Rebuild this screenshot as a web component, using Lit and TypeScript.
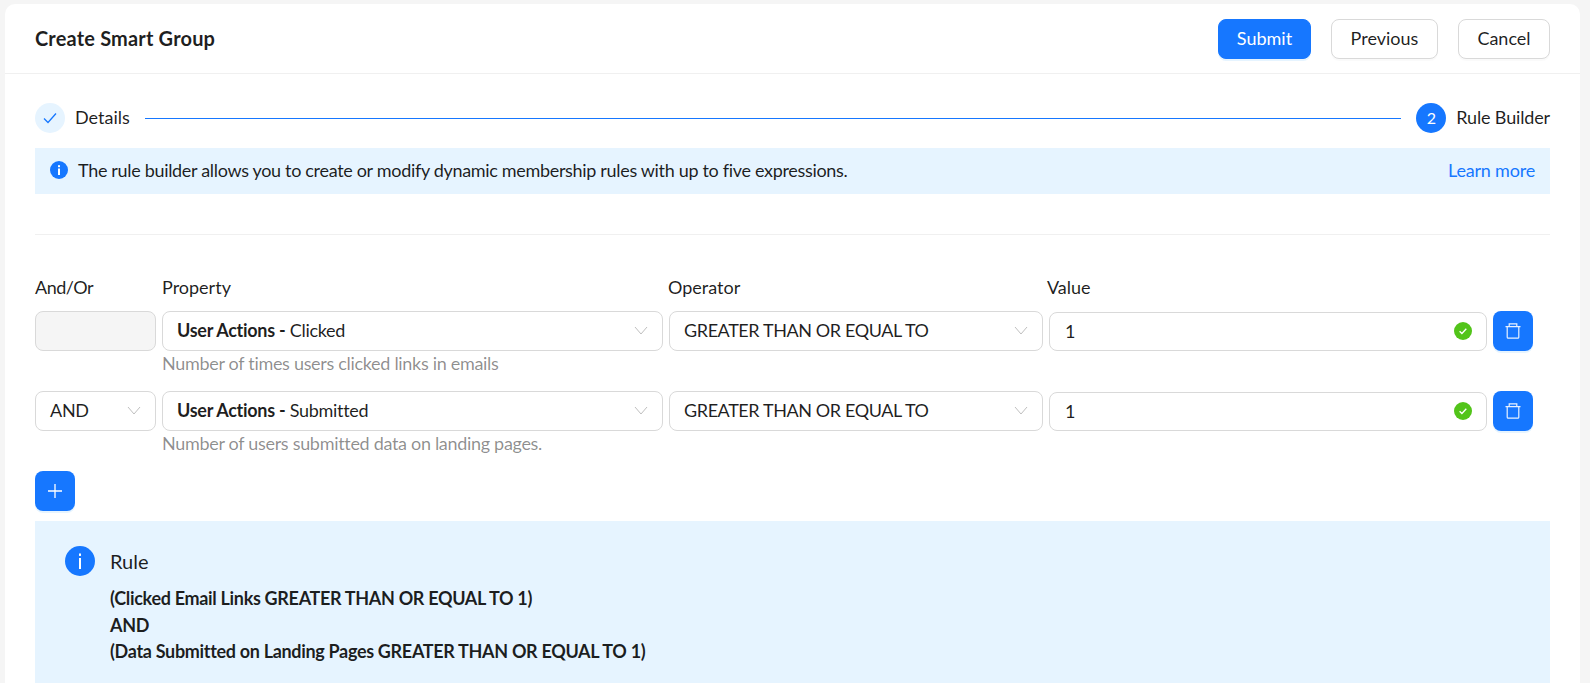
import { LitElement, html, css, svg } from "lit";
import { customElement } from "lit/decorators.js";

const chevron = html`<svg class="chev" viewBox="0 0 14 9" width="14" height="9" fill="none" stroke="#bfbfbf" stroke-width="1"><path d="M1 1l6 7 6-7"/></svg>`;
const okIcon = html`<svg class="ok" viewBox="0 0 18 18" width="18" height="18"><circle cx="9" cy="9" r="9" fill="#52c41a"/><path d="M5.6 9.2l2.3 2.3 4.4-4.8" fill="none" stroke="#fff" stroke-width="1.3"/></svg>`;
const trash = html`<svg viewBox="0 0 16 16" width="16" height="16" fill="none" stroke="#fff" stroke-width="1.2" opacity=".9"><path d="M.5 3.6h15M4.2 3.6V.8h7.6v2.8M2.2 3.6v10.6q0 1 1 1h9.6q1 0 1-1V3.6"/></svg>`;
const infoSmall = svg`<circle cx="9" cy="9" r="9" fill="#1677ff"/><rect x="8" y="7.5" width="2" height="6.5" fill="#fff"/><rect x="8" y="4.2" width="2" height="2" fill="#fff"/>`;

@customElement("app-root")
export class AppRoot extends LitElement {
  static styles = css`
    :host { display: block; height: 683px; overflow: hidden; background: #f5f5f5; font-family: Lato, sans-serif; font-size: 18px; color: rgba(0,0,0,.88); padding: 4px 10px 0 5px; box-sizing: border-box; }
    * { box-sizing: border-box; }
    .card { background: #fff; border-radius: 10px 10px 0 0; height: 700px; }
    .head { height: 70px; border-bottom: 1px solid #f0f0f0; display: flex; align-items: center; padding: 0 30px; gap: 20px; }
    .title { font-size: 20px; font-weight: 700; margin-right: auto; letter-spacing: .17px; padding-bottom: 1px; }
    .btn { height: 40px; border-radius: 8px; border: 1px solid #d9d9d9; background: #fff; font: inherit; font-size: 18px; color: inherit; box-shadow: 0 2px 0 rgba(0,0,0,.02); padding: 0 0 2px; }
    .submit { width: 93px; background: #1677ff; border-color: #1677ff; color: #fff; box-shadow: 0 2px 0 rgba(5,145,255,.1); }
    .prev { width: 107px; }
    .cancel { width: 92px; }
    .body { padding: 29px 30px 0; }
    .steps { display: flex; align-items: center; height: 30px; }
    .dot { width: 30px; height: 30px; border-radius: 50%; display: flex; align-items: center; justify-content: center; flex: none; }
    .dot.done { background: #e6f4ff; }
    .dot.now { background: #1677ff; color: #fff; font-size: 16px; padding-bottom: 2px; }
    .steps .lab { margin-left: 10px; margin-bottom: 2px; }
    .steps .lab.last { letter-spacing: -.15px; }
    .line { flex: 1; height: 1px; background: #1677ff; margin: 0 15px; }
    .note { margin-top: 15px; height: 46px; background: #e6f4ff; display: flex; align-items: center; padding: 0 15px 2px; letter-spacing: -.32px; }
    .note svg { margin-right: 10px; flex: none; }
    .note a { margin-left: auto; color: #1677ff; letter-spacing: -.2px; }
    hr { margin: 40px 0 0; border: 0; border-top: 1px solid #f0f0f0; }
    .grid { display: grid; grid-template-columns: 121px 501px 374px 438px 40px; column-gap: 6px; margin-top: 40px; align-items: start; }
    .lb { line-height: 24px; margin-bottom: 12px; }
    .lb.andor { letter-spacing: -.5px; }
    .lb.op { margin-left: -1px; }
    .lb.val { margin-left: -2px; }
    .sel { height: 40px; border: 1px solid #d9d9d9; border-radius: 8px; background: #fff; display: flex; align-items: center; padding: 0 14px 2px; letter-spacing: -.3px; justify-content: space-between; }
    .sel b { letter-spacing: -.28px; }
    .sel.caps { letter-spacing: -.4px; }
    .sel.off { background: #f5f5f5; }
    .inp { height: 39px; margin-top: 1px; border: 1px solid #d9d9d9; border-radius: 8px; display: flex; align-items: center; justify-content: space-between; padding: 0 14px 2px 15px; }
    .del { width: 40px; height: 40px; background: #1677ff; border-radius: 8px; display: flex; align-items: center; justify-content: center; border: 0; padding: 0; box-shadow: 0 2px 0 rgba(5,145,255,.1); }
    .hint { color: rgba(0,0,0,.45); line-height: 24px; height: 40px; grid-column: 2 / 6; letter-spacing: -.31px; }
    .add { display: flex; width: 40px; height: 40px; background: #1677ff; border-radius: 8px; align-items: center; justify-content: center; border: 0; padding: 0; box-shadow: 0 2px 0 rgba(5,145,255,.1); }
    .rule { margin-top: 10px; background: #e6f4ff; padding: 25px 30px; display: grid; grid-template-columns: 30px 1fr; column-gap: 15px; }
    .rule h4 { margin: 0; font-weight: 400; font-size: 20px; line-height: 30px; }
    .rule .txt { grid-column: 2; margin-top: 9px; font-weight: 700; line-height: 26.5px; letter-spacing: -.32px; }
  `;

  private row(first: unknown, bold: string, rest: string, off: boolean) {
    return html`
      <div class="sel ${off ? "off" : ""}">${first}</div>
      <div class="sel"><span><b>${bold}</b> ${rest}</span>${chevron}</div>
      <div class="sel caps"><span>GREATER THAN OR EQUAL TO</span>${chevron}</div>
      <div class="inp"><span>1</span>${okIcon}</div>
      <button class="del">${trash}</button>`;
  }

  render() {
    return html`
      <div class="card">
        <div class="head">
          <div class="title">Create Smart Group</div>
          <button class="btn submit">Submit</button>
          <button class="btn prev">Previous</button>
          <button class="btn cancel">Cancel</button>
        </div>
        <div class="body">
          <div class="steps">
            <div class="dot done"><svg width="14" height="12" viewBox="0 0 14 12" fill="none" stroke="#1677ff" stroke-width="1.3"><path d="M1 6.5l4 4 8-9"/></svg></div>
            <span class="lab">Details</span>
            <div class="line"></div>
            <div class="dot now">2</div>
            <span class="lab last">Rule Builder</span>
          </div>
          <div class="note">
            <svg width="18" height="18" viewBox="0 0 18 18">${infoSmall}</svg>
            <span>The rule builder allows you to create or modify dynamic membership rules with up to five expressions.</span>
            <a>Learn more</a>
          </div>
          <hr />
          <div class="grid">
            <div class="lb andor">And/Or</div><div class="lb">Property</div><div class="lb op">Operator</div><div class="lb val">Value</div><div></div>
            ${this.row("", "User Actions -", "Clicked", true)}
            <div></div><div class="hint">Number of times users clicked links in emails</div>
            ${this.row(html`<span>AND</span>${chevron}`, "User Actions -", "Submitted", false)}
            <div></div><div class="hint">Number of users submitted data on landing pages.</div>
          </div>
          <button class="add"><svg width="16" height="16" viewBox="0 0 16 16" stroke="#fff" stroke-width="1.3"><path d="M8 1v14M1 8h14"/></svg></button>
          <div class="rule">
            <svg width="30" height="30" viewBox="0 0 30 30"><circle cx="15" cy="15" r="15" fill="#1677ff"/><rect x="14" y="12" width="2" height="11" fill="#fff"/><rect x="14" y="7.5" width="2" height="2.4" fill="#fff"/></svg>
            <h4>Rule</h4>
            <div class="txt">(Clicked Email Links GREATER THAN OR EQUAL TO 1)<br />AND<br />(Data Submitted on Landing Pages GREATER THAN OR EQUAL TO 1)</div>
          </div>
        </div>
      </div>`;
  }
}
